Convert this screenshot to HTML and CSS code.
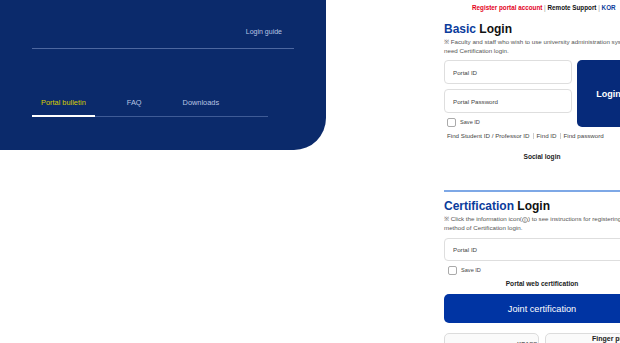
FILE: index.html
```
<!DOCTYPE html>
<html lang="en">
  <head>
    <meta charset="UTF-8" />
    <meta name="viewport" content="width=device-width, initial-scale=1.0" />
    <title>portal login</title>
    <link rel="stylesheet" href="styles.css">
  </head>

  <body>
    <div class="page">
      <!-- left hero -->
      <div class="hero">
        <div class="guide"><a href="#">Login guide</a></div>
        <ul class="tabs">
          <li class="tab active">Portal bulletin</li>
          <li class="tab">FAQ</li>
          <li class="tab">Downloads</li>
        </ul>
      </div>

      <!-- right login column -->
      <div class="login">
        <div class="top-links">
          <a href="#" class="link-red">Register portal account</a>
          <span class="bar">|</span>
          <a href="#">Remote Support</a>
          <span class="bar">|</span>
          <a href="#" class="link-blue">KOR</a>
        </div>

        <h2 class="title"><span>Basic</span> Login</h2>
        <p class="note">※ Faculty and staff who wish to use university administration system need Certification login.</p>

        <div class="login-grid">
          <input class="field" type="text" placeholder="Portal ID" />
          <button class="btn-login">Login</button>
          <input class="field" type="password" placeholder="Portal Password" />
          <label class="save"><span class="check"></span>Save ID</label>
        </div>

        <div class="find">
          <a href="#">Find Student ID / Professor ID</a>
          <span class="sep"></span>
          <a href="#">Find ID</a>
          <span class="sep"></span>
          <a href="#">Find password</a>
        </div>

        <div class="social">Social login</div>

        <div class="divider"></div>

        <h2 class="title cert-title"><span>Certification</span> Login</h2>
        <p class="note">※ Click the information icon(<b class="info">i</b>) to see instructions for registering the method of Certification login.</p>

        <input class="field field-full" type="text" placeholder="Portal ID" />
        <label class="save save-cert"><span class="check"></span>Save ID</label>

        <div class="web-cert">Portal web certification</div>
        <button class="btn-joint">Joint certification</button>

        <div class="cert-grid">
          <div class="cert-btn"><span class="cert-low">KPASS</span></div>
          <div class="cert-btn"><span class="cert-top">Finger print</span></div>
        </div>
      </div>
    </div>
  </body>
</html>
```

FILE: styles.css
```
* {
  margin: 0;
  padding: 0;
  box-sizing: border-box;
  font-family: "Liberation Sans", Arial, sans-serif;
}
body {
  background: #fff;
  overflow: hidden;
}
a {
  color: inherit;
  text-decoration: none;
}

.page {
  display: flex;
  gap: 118px;
  width: 640px;
}

/* hero */
.hero {
  flex: 0 0 326px;
  height: 150px;
  padding-left: 32px;
  background: #0b2a6b;
  border-bottom-right-radius: 32px;
}
.guide {
  width: 262px;
  padding: 27px 12px 12px 0;
  border-bottom: 1px solid #4d67a0;
  color: #b8c5e3;
  font-size: 7px;
  line-height: 9px;
  text-align: right;
}
.tabs {
  display: flex;
  gap: 23px;
  width: 236px;
  margin-top: 49px;
  border-bottom: 1px solid #3f5b96;
  list-style: none;
}
.tab {
  padding: 0 9px 8px;
  color: #b8c5e3;
  font-size: 7.4px;
  line-height: 9px;
}
.tab.active {
  margin-bottom: -1px;
  border-bottom: 2px solid #fff;
  color: #d9cd00;
}

/* login column */
.login {
  flex: 0 0 196px;
  width: 196px;
}
.top-links {
  padding: 4px 0 0 28px;
  font-size: 6.3px;
  font-weight: 700;
  line-height: 8px;
  color: #111;
  white-space: nowrap;
}
.top-links .bar {
  margin: 0;
  color: #999;
  font-weight: 400;
}
.link-red {
  color: #e4001c;
}
.link-blue {
  color: #0b3c9c;
}

.title {
  margin-top: 10px;
  font-size: 12px;
  line-height: 14px;
  font-weight: 700;
  color: #111;
}
.title span {
  color: #0b3c9c;
}
.note {
  width: 200px;
  margin-top: 1px;
  font-size: 6.2px;
  line-height: 9px;
  color: #555;
}
.info {
  display: inline-block;
  width: 6px;
  height: 6px;
  border: 0.6px solid #999;
  border-radius: 50%;
  font-size: 4.5px;
  line-height: 5px;
  text-align: center;
  color: #888;
  vertical-align: -1px;
}

.login-grid {
  display: grid;
  grid-template-columns: 128px 63px;
  grid-template-rows: 24px 24px 9px;
  column-gap: 5px;
  row-gap: 5px;
  margin-top: 5px;
}
.field {
  display: block;
  height: 24px;
  padding-left: 8px;
  border: 1px solid #dedede;
  border-radius: 4px;
  background: #fff;
  font-size: 6.2px;
  color: #333;
  outline: none;
}
.field::placeholder {
  color: #444;
}
.field-full {
  width: 196px;
  height: 23px;
  margin-top: 6px;
}
.btn-login {
  grid-column: 2;
  grid-row: 1 / 4;
  border: none;
  border-radius: 5px;
  background: #062a7a;
  color: #fff;
  font-size: 9px;
  font-weight: 700;
}
.save {
  display: flex;
  align-items: center;
  gap: 4px;
  padding-left: 3px;
  font-size: 5.6px;
  line-height: 9px;
  color: #444;
}
.check {
  width: 9px;
  height: 9px;
  border: 1px solid #aaa;
  border-radius: 2px;
  background: #fff;
}
.save-cert {
  margin-top: 5px;
  padding-left: 4px;
}

.find {
  display: flex;
  align-items: center;
  gap: 3px;
  margin-top: 4px;
  padding-left: 3px;
  font-size: 6.2px;
  line-height: 9px;
  color: #444;
  white-space: nowrap;
}
.sep {
  width: 1px;
  height: 6px;
  background: #ccc;
}

.social {
  margin-top: 12px;
  font-size: 6.6px;
  font-weight: 700;
  line-height: 9px;
  color: #222;
  text-align: center;
}
.divider {
  height: 2px;
  margin-top: 29px;
  background: #7ea8e6;
}
.cert-title {
  margin-top: 7px;
}

.web-cert {
  margin-top: 4px;
  font-size: 6.6px;
  font-weight: 700;
  line-height: 9px;
  color: #222;
  text-align: center;
}
.btn-joint {
  display: block;
  width: 196px;
  height: 29px;
  margin-top: 6px;
  border: none;
  border-radius: 5px;
  background: #0034a3;
  color: #fff;
  font-size: 9.2px;
  font-weight: 400;
}
.cert-grid {
  display: grid;
  grid-template-columns: 95px 95px;
  gap: 6px;
  margin-top: 10px;
}
.cert-btn {
  height: 40px;
  border: 1px solid #dcdcdc;
  border-radius: 5px;
  background: #fafafa;
  font-size: 7px;
  font-weight: 700;
  color: #222;
}
.cert-low {
  display: block;
  padding: 7px 0 0 72px;
  color: #666;
  font-size: 6px;
}
.cert-top {
  display: block;
  padding: 1px 0 0 46px;
  white-space: nowrap;
}
```
